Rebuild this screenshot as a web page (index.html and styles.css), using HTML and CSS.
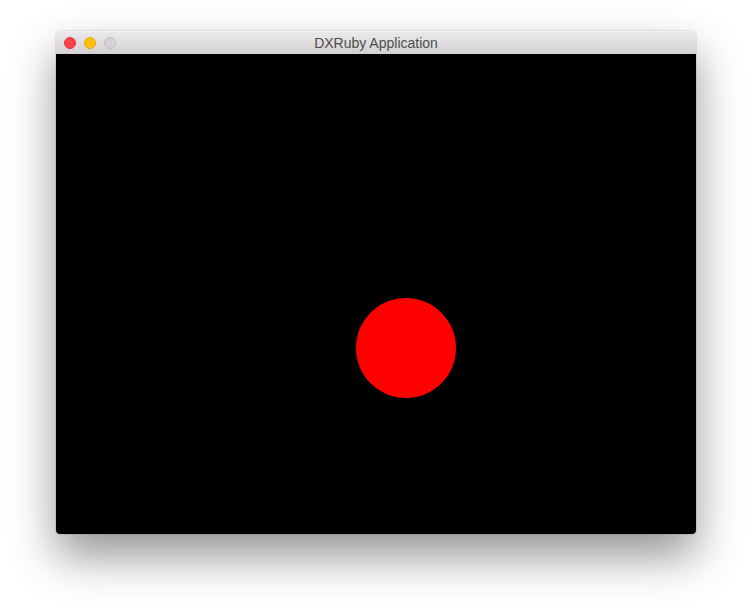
FILE: index.html
```html
<!DOCTYPE html>
<html>
<head>
<meta charset="utf-8">
<link rel="stylesheet" href="styles.css">
</head>
<body>
<div class="window">
  <div class="titlebar">
    <div class="lights">
      <span class="light red"></span>
      <span class="light yellow"></span>
      <span class="light gray"></span>
    </div>
    <div class="title">DXRuby Application</div>
  </div>
  <div class="content">
    <svg class="canvas" width="640" height="480" viewBox="0 0 640 480">
      <circle cx="350" cy="294" r="50" fill="#ff0000"/>
    </svg>
  </div>
</div>
</body>
</html>
```

FILE: styles.css
```css
html, body {
  margin: 0;
  padding: 0;
  background: #ffffff;
}
body {
  width: 752px;
  height: 614px;
  overflow: hidden;
}
.window {
  width: 640px;
  margin: 31px 0 0 56px;
  border-radius: 5px 5px 4px 4px;
  overflow: hidden;
  box-shadow: 0 0 0 1px rgba(0,0,0,0.08), 0 22px 45px rgba(0,0,0,0.42);
}
.titlebar {
  position: relative;
  height: 23px;
  background: linear-gradient(#ebe9eb, #d3d1d3);
  display: flex;
  align-items: center;
  justify-content: center;
  box-sizing: border-box;
  border-top: 1px solid #f4f4f4;
}
.lights {
  position: absolute;
  left: 8px;
  top: 5px;
  display: flex;
  gap: 8px;
}
.light {
  width: 12px;
  height: 12px;
  border-radius: 50%;
  box-sizing: border-box;
}
.red {
  background: #fc4148;
  border: 1px solid #e7343b;
}
.yellow {
  background: #fec00e;
  border: 1px solid #e6aa10;
}
.gray {
  background: #d4d2d4;
  border: 1px solid #c2c0c2;
}
.title {
  font-family: "Liberation Sans", Arial, sans-serif;
  font-size: 14px;
  color: #4d4d4d;
  line-height: 22px;
}
.content {
  height: 480px;
  background: #000000;
}
.canvas {
  display: block;
}
```
